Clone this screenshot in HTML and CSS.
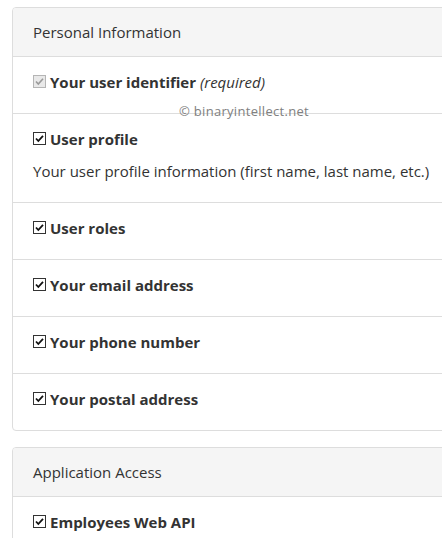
FILE: index.html
```html
<!DOCTYPE html>
<html>
<head>
<meta charset="utf-8">
<link rel="stylesheet" href="styles.css">
</head>
<body>
<div class="page">
  <section class="panel">
    <div class="panel-heading">Personal Information</div>
    <ul class="list">
      <li class="item">
        <label class="check">
          <svg class="box" width="13" height="13" viewBox="0 0 13 13"><rect x="0.5" y="0.5" width="12" height="12" fill="#e9e9e9" stroke="#b5b5b5"/><path d="M3 6.5 L5.3 9 L10 3.8" fill="none" stroke="#9a9a9a" stroke-width="1.6"/></svg>
          <span><strong>Your user identifier</strong> <em>(required)</em></span>
        </label>
      </li>
      <li class="item">
        <label class="check">
          <svg class="box" width="13" height="13" viewBox="0 0 13 13"><rect x="0.5" y="0.5" width="12" height="12" fill="#fff" stroke="#333"/><path d="M3 6.5 L5.3 9 L10 3.8" fill="none" stroke="#111" stroke-width="1.8"/></svg>
          <span><strong>User profile</strong></span>
        </label>
        <p class="desc">Your user profile information (first name, last name, etc.)</p>
      </li>
      <li class="item">
        <label class="check">
          <svg class="box" width="13" height="13" viewBox="0 0 13 13"><rect x="0.5" y="0.5" width="12" height="12" fill="#fff" stroke="#333"/><path d="M3 6.5 L5.3 9 L10 3.8" fill="none" stroke="#111" stroke-width="1.8"/></svg>
          <span><strong>User roles</strong></span>
        </label>
      </li>
      <li class="item">
        <label class="check">
          <svg class="box" width="13" height="13" viewBox="0 0 13 13"><rect x="0.5" y="0.5" width="12" height="12" fill="#fff" stroke="#333"/><path d="M3 6.5 L5.3 9 L10 3.8" fill="none" stroke="#111" stroke-width="1.8"/></svg>
          <span><strong>Your email address</strong></span>
        </label>
      </li>
      <li class="item">
        <label class="check">
          <svg class="box" width="13" height="13" viewBox="0 0 13 13"><rect x="0.5" y="0.5" width="12" height="12" fill="#fff" stroke="#333"/><path d="M3 6.5 L5.3 9 L10 3.8" fill="none" stroke="#111" stroke-width="1.8"/></svg>
          <span><strong>Your phone number</strong></span>
        </label>
      </li>
      <li class="item">
        <label class="check">
          <svg class="box" width="13" height="13" viewBox="0 0 13 13"><rect x="0.5" y="0.5" width="12" height="12" fill="#fff" stroke="#333"/><path d="M3 6.5 L5.3 9 L10 3.8" fill="none" stroke="#111" stroke-width="1.8"/></svg>
          <span><strong>Your postal address</strong></span>
        </label>
      </li>
    </ul>
    <div class="watermark">© binaryintellect.net</div>
  </section>

  <section class="panel">
    <div class="panel-heading">Application Access</div>
    <ul class="list">
      <li class="item">
        <label class="check">
          <svg class="box" width="13" height="13" viewBox="0 0 13 13"><rect x="0.5" y="0.5" width="12" height="12" fill="#fff" stroke="#333"/><path d="M3 6.5 L5.3 9 L10 3.8" fill="none" stroke="#111" stroke-width="1.8"/></svg>
          <span><strong>Employees Web API</strong></span>
        </label>
      </li>
    </ul>
  </section>
</div>
</body>
</html>
```
FILE: styles.css
```css
html, body {
  margin: 0;
  padding: 0;
  overflow: hidden;
  background: #fff;
}
body {
  font-family: "Open Sans", "Noto Sans", sans-serif;
  font-size: 15px;
  color: #333;
}
.page {
  padding: 7px 0 0 12px;
  width: 470px;
}
.panel {
  position: relative;
  border: 1px solid #ddd;
  border-radius: 4px;
  margin-bottom: 16px;
  background: #fff;
}
.panel-heading {
  background: #f5f5f5;
  border-bottom: 1px solid #ddd;
  border-radius: 3px 3px 0 0;
  padding: 12px 20px;
  line-height: 24px;
}
.list {
  list-style: none;
  margin: 0;
  padding: 0;
}
.item {
  padding: 13px 20px 19px;
  border-top: 1px solid #ddd;
  line-height: 24px;
}
.item:first-child {
  border-top: none;
}
.check {
  display: flex;
  align-items: center;
  gap: 4px;
}
.check strong {
  font-weight: 700;
}
.check em {
  font-style: italic;
}
.box {
  flex: none;
  margin-top: -2px;
}
.desc {
  margin: 8px 0 0;
}
.watermark {
  position: absolute;
  left: 166px;
  top: 94px;
  font-size: 13px;
  color: #808080;
  line-height: 18px;
  letter-spacing: 0.3px;
}
```
